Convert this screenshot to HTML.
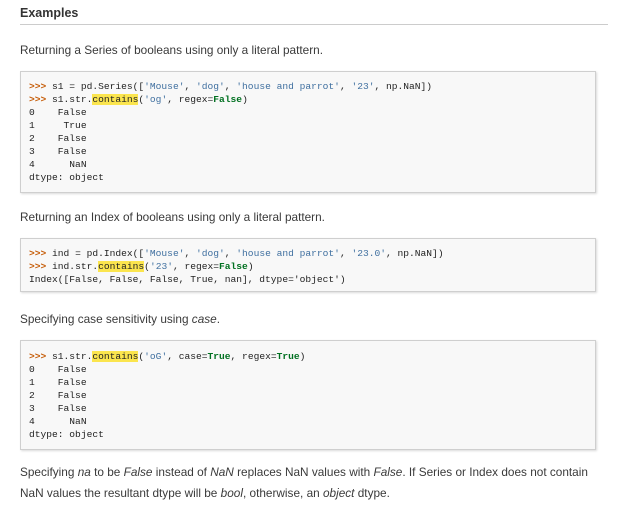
<!DOCTYPE html>
<html><head><style>
body{margin:0;width:630px;height:509px;background:#fff;position:relative;font-family:"Liberation Sans",sans-serif;color:#3a3a3a;overflow:hidden}
.a{position:absolute;white-space:nowrap}
.p{font-size:11.8px;left:20px}
h3{position:absolute;left:20px;top:6px;margin:0;font-size:12.5px;font-weight:bold;color:#333}
.hr{position:absolute;left:20px;top:24px;width:588px;height:1px;background:#ccc}
.box{position:absolute;left:20px;width:574px;background:#f8f8f8;border:1px solid #cfcfcf;box-shadow:1px 1px 2px rgba(0,0,0,.15)}
pre{margin:0;position:absolute;left:8px;font-family:"Liberation Mono",monospace;font-size:9.6px;line-height:13px;color:#222}
.g{color:#c65d09;font-weight:bold}
.s{color:#4070a0}
.k{color:#007020;font-weight:bold}
.h{background:#fbe54e}
</style></head><body>
<h3>Examples</h3>
<div class="hr"></div>
<div class="a p" style="top:43px">Returning a Series of booleans using only a literal pattern.</div>
<div class="box" style="top:71px;height:120px"><pre style="top:8px"><span class="g">&gt;&gt;&gt;</span> s1 = pd.Series([<span class="s">'Mouse'</span>, <span class="s">'dog'</span>, <span class="s">'house and parrot'</span>, <span class="s">'23'</span>, np.NaN])
<span class="g">&gt;&gt;&gt;</span> s1.str.<span class="h">contains</span>(<span class="s">'og'</span>, regex=<span class="k">False</span>)
0    False
1     True
2    False
3    False
4      NaN
dtype: object</pre></div>
<div class="a p" style="top:210px">Returning an Index of booleans using only a literal pattern.</div>
<div class="box" style="top:238px;height:52px"><pre style="top:8px"><span class="g">&gt;&gt;&gt;</span> ind = pd.Index([<span class="s">'Mouse'</span>, <span class="s">'dog'</span>, <span class="s">'house and parrot'</span>, <span class="s">'23.0'</span>, np.NaN])
<span class="g">&gt;&gt;&gt;</span> ind.str.<span class="h">contains</span>(<span class="s">'23'</span>, regex=<span class="k">False</span>)
Index([False, False, False, True, nan], dtype='object')</pre></div>
<div class="a p" style="top:312px">Specifying case sensitivity using <i>case</i>.</div>
<div class="box" style="top:340px;height:108px"><pre style="top:9px"><span class="g">&gt;&gt;&gt;</span> s1.str.<span class="h">contains</span>(<span class="s">'oG'</span>, case=<span class="k">True</span>, regex=<span class="k">True</span>)
0    False
1    False
2    False
3    False
4      NaN
dtype: object</pre></div>
<div class="a p" style="top:465px">Specifying <i>na</i> to be <i>False</i> instead of <i>NaN</i> replaces NaN values with <i>False</i>. If Series or Index does not contain</div>
<div class="a p" style="top:486px">NaN values the resultant dtype will be <i>bool</i>, otherwise, an <i>object</i> dtype.</div>
</body></html>
